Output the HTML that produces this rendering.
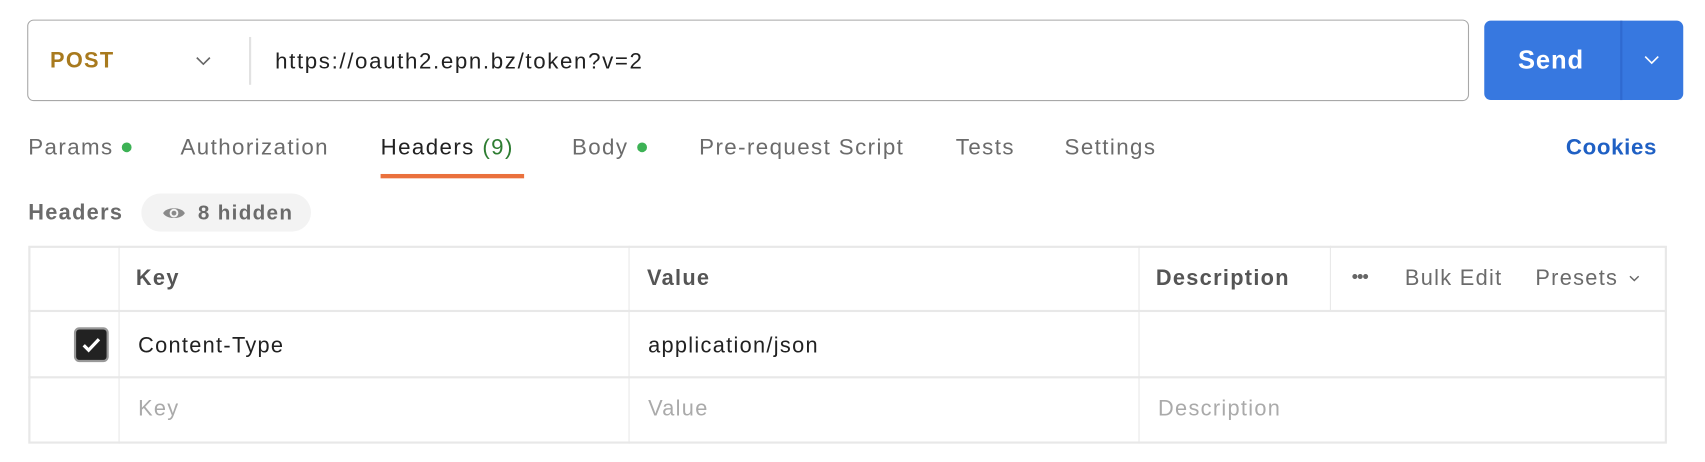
<!DOCTYPE html>
<html><head><meta charset="utf-8"><style>
*{box-sizing:border-box;margin:0;padding:0}
html,body{width:1705px;height:462px;overflow:hidden;background:#fff}
#w{position:absolute;left:0;top:0;width:1568px;height:425px;transform:scale(1.08737);transform-origin:0 0;font-family:"Liberation Sans",sans-serif;letter-spacing:1.2px}
.a{position:absolute;white-space:nowrap}
.tab{position:absolute;top:124px;font-size:20.5px;color:#6b6b6b;letter-spacing:1.3px}
.dot{display:inline-block;width:9px;height:9px;border-radius:50%;background:#3db255;margin-left:8px;vertical-align:2px}
.hd{position:absolute;top:245px;font-size:20px;font-weight:bold;color:#555}
.c{position:absolute;font-size:20px}
</style></head><body><div id="w">
<div class="a" style="left:25px;top:18px;width:1326px;height:75px;border:1.5px solid #a8a8a8;border-radius:6px"></div>
<div class="a" style="left:46px;top:45px;font-size:20px;font-weight:bold;color:#a87a1e">POST</div>
<svg class="a" style="left:179px;top:51px" width="16" height="10" viewBox="0 0 16 10"><path d="M2 2l6 6 6-6" fill="none" stroke="#666" stroke-width="1.5"/></svg>
<div class="a" style="left:229px;top:34px;width:1.5px;height:44px;background:#e2e2e2"></div>
<div class="a" style="left:253px;top:45px;font-size:20.5px;color:#212121;letter-spacing:1.5px">https://oauth2.epn.bz/token?v=2</div>
<div class="a" style="left:1365px;top:19px;width:183px;height:73px;background:#3778e0;border-radius:6px"></div>
<div class="a" style="left:1490px;top:19px;width:1.5px;height:73px;background:#2f6ad0"></div>
<div class="a" style="left:1396px;top:42px;font-size:23.5px;font-weight:bold;color:#fff;letter-spacing:0.8px">Send</div>
<svg class="a" style="left:1511px;top:50px" width="16" height="10" viewBox="0 0 16 10"><path d="M2 2l6 6 6-6" fill="none" stroke="#fff" stroke-width="1.5"/></svg>
<div class="tab" style="left:26px">Params<span class="dot"></span></div>
<div class="tab" style="left:166px">Authorization</div>
<div class="tab" style="left:350px;color:#212121">Headers <span style="color:#2e7d32">(9)</span></div>
<div class="a" style="left:350px;top:160px;width:132px;height:4px;background:#ea713d"></div>
<div class="tab" style="left:526px">Body<span class="dot"></span></div>
<div class="tab" style="left:643px">Pre-request Script</div>
<div class="tab" style="left:879px">Tests</div>
<div class="tab" style="left:979px">Settings</div>
<div class="tab" style="left:1440px;color:#1f60c4;font-weight:bold;letter-spacing:0.6px">Cookies</div>
<div class="a" style="left:26px;top:185px;font-size:20px;font-weight:bold;color:#6b6b6b">Headers</div>
<div class="a" style="left:130px;top:178px;width:156px;height:35px;background:#f3f3f3;border-radius:18px"></div>
<svg class="a" style="left:149px;top:188px" width="22" height="16" viewBox="0 0 22 16"><path d="M1 8C4 2 18 2 21 8C18 14 4 14 1 8Z" fill="#8a8a8a"/><circle cx="11" cy="8" r="4" fill="#f3f3f3"/><circle cx="11" cy="8" r="2.2" fill="#8a8a8a"/></svg>
<div class="a" style="left:182px;top:186px;font-size:19px;font-weight:bold;color:#6b6b6b">8 hidden</div>
<div class="a" style="left:26px;top:226px;width:1507px;height:182px;border:2px solid #e8e8e8"></div>
<div class="a" style="left:26px;top:285px;width:1507px;height:2px;background:#e8e8e8"></div>
<div class="a" style="left:26px;top:346px;width:1507px;height:2px;background:#e8e8e8"></div>
<div class="a" style="left:109px;top:226px;width:1px;height:182px;background:#e8e8e8"></div>
<div class="a" style="left:578px;top:226px;width:1px;height:182px;background:#e8e8e8"></div>
<div class="a" style="left:1047px;top:226px;width:1px;height:182px;background:#e8e8e8"></div>
<div class="a" style="left:1223px;top:226px;width:1px;height:60px;background:#e8e8e8"></div>
<div class="hd" style="left:125px">Key</div>
<div class="hd" style="left:595px">Value</div>
<div class="hd" style="left:1063px">Description</div>
<div class="a" style="left:1243px;top:245px;font-size:17px;color:#666;letter-spacing:-1px">•••</div>
<div class="a" style="left:1292px;top:245px;font-size:20px;color:#6b6b6b">Bulk Edit</div>
<div class="a" style="left:1412px;top:245px;font-size:20px;color:#6b6b6b">Presets</div>
<svg class="a" style="left:1497px;top:252px" width="12" height="8" viewBox="0 0 12 8"><path d="M2 2l4 4 4-4" fill="none" stroke="#666" stroke-width="1.3"/></svg>
<div class="a" style="left:68px;top:301px;width:32px;height:32px;background:#222;border:2px solid #999;border-radius:5px"></div>
<svg class="a" style="left:72px;top:305px" width="24" height="24" viewBox="0 0 24 24"><path d="M5 12.5l4.5 4.5L19 7" fill="none" stroke="#fff" stroke-width="3"/></svg>
<div class="c" style="left:127px;top:307px;color:#212121">Content-Type</div>
<div class="c" style="left:596px;top:307px;color:#212121">application/json</div>
<div class="c" style="left:127px;top:365px;color:#aaa">Key</div>
<div class="c" style="left:596px;top:365px;color:#aaa">Value</div>
<div class="c" style="left:1065px;top:365px;color:#aaa">Description</div>
</div></body></html>
